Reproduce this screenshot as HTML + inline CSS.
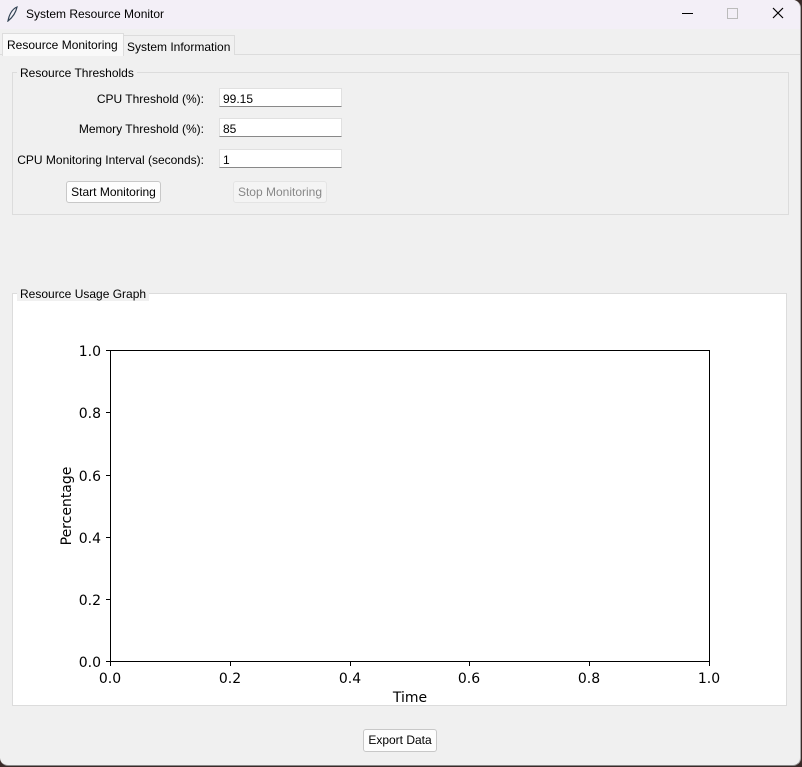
<!DOCTYPE html>
<html><head><meta charset="utf-8"><style>
body{margin:0;width:802px;height:767px;overflow:hidden;background:#3a2a28;font-family:"Liberation Sans",sans-serif;}
.win{position:absolute;left:0;top:0;width:800px;height:765px;background:#f0f0f0;border-right:1px solid #aaa;border-bottom:1px solid #888;border-radius:0 8px 8px 8px;overflow:hidden}
.title{position:absolute;left:0;top:0;width:800px;height:29px;background:#f3eff7;font-size:12px;}
.abs{position:absolute}
.lbl{position:absolute;font-size:12px;color:#000;white-space:nowrap}
.entry{position:absolute;left:219px;width:123px;height:19px;background:#fff;border:1px solid #e0e0e0;border-bottom:1px solid #888;font-size:12px;box-sizing:border-box;padding:3px 0 0 3px}
.btn{position:absolute;height:22px;border:1px solid #c8c8c8;border-radius:3px;background:#fdfdfd;font-size:12px;text-align:center;line-height:20px;box-sizing:border-box}
</style></head><body>
<div class="win">
<div class="title">
<svg class="abs" style="left:6px;top:6px" width="12" height="16" viewBox="0 0 12 16"><path d="M2 15 C3 9 6 3 11 1 C10 6 7 11 2 15Z" fill="none" stroke="#345" stroke-width="1.2"/></svg>
<div class="lbl" style="left:26px;top:7px">System Resource Monitor</div>
<div class="abs" style="left:682px;top:13px;width:11px;height:1px;background:#000"></div>
<div class="abs" style="left:727px;top:8px;width:9px;height:9px;border:1px solid #bbb"></div>
<svg class="abs" style="left:772px;top:7px" width="12" height="12"><path d="M1 1L11 11M11 1L1 11" stroke="#000" stroke-width="1.2"/></svg>
</div>
<div class="abs" style="left:0;top:54px;width:800px;height:1px;background:#dcdcdc"></div>
<div class="abs" style="left:2px;top:33px;width:120px;height:22px;background:#f9f9f9;border:1px solid #ddd;border-bottom:none"></div>
<div class="lbl" style="left:7px;top:38px">Resource Monitoring</div>
<div class="abs" style="left:123px;top:35px;width:110px;height:19px;background:#f0f0f0;border:1px solid #dcdcdc;border-bottom:none"></div>
<div class="lbl" style="left:127px;top:40px">System Information</div>

<div class="abs" style="left:12px;top:72px;width:775px;height:141px;border:1px solid #dcdcdc"></div>
<div class="lbl" style="left:17px;top:66px;background:#f0f0f0;padding:0 3px">Resource Thresholds</div>
<div class="lbl" style="right:596px;top:92px">CPU Threshold (%):</div>
<div class="lbl" style="right:596px;top:122px">Memory Threshold (%):</div>
<div class="lbl" style="right:596px;top:153px">CPU Monitoring Interval (seconds):</div>
<div class="entry" style="top:88px">99.15</div>
<div class="entry" style="top:118px">85</div>
<div class="entry" style="top:149px">1</div>
<div class="btn" style="left:66px;top:181px;width:95px">Start Monitoring</div>
<div class="btn" style="left:233px;top:181px;width:94px;color:#888;border-color:#e4e4e4;background:#f4f4f4">Stop Monitoring</div>

<div class="abs" style="left:12px;top:293px;width:775px;height:413px;border:1px solid #dcdcdc;background:#fff;box-sizing:border-box"></div>
<div class="lbl" style="left:17px;top:287px;background:#f0f0f0;padding:0 3px">Resource Usage Graph</div>
<svg class="abs" style="left:0;top:0" width="800" height="767" font-family="DejaVu Sans, sans-serif" font-size="14">
<rect x="110.5" y="350.5" width="599" height="311" fill="none" stroke="#000" stroke-width="1"/>
<g stroke="#000">
<line x1="106" x2="110" y1="350.5" y2="350.5"/><line x1="106" x2="110" y1="412.5" y2="412.5"/><line x1="106" x2="110" y1="475.5" y2="475.5"/><line x1="106" x2="110" y1="537.5" y2="537.5"/><line x1="106" x2="110" y1="599.5" y2="599.5"/><line x1="106" x2="110" y1="661.5" y2="661.5"/>
<line y1="662" y2="666" x1="110.5" x2="110.5"/><line y1="662" y2="666" x1="230.5" x2="230.5"/><line y1="662" y2="666" x1="350.5" x2="350.5"/><line y1="662" y2="666" x1="469.5" x2="469.5"/><line y1="662" y2="666" x1="589.5" x2="589.5"/><line y1="662" y2="666" x1="709.5" x2="709.5"/>
</g>
<g text-anchor="end"><text x="101" y="356">1.0</text><text x="101" y="418">0.8</text><text x="101" y="481">0.6</text><text x="101" y="543">0.4</text><text x="101" y="605">0.2</text><text x="101" y="667">0.0</text></g>
<g text-anchor="middle"><text x="110" y="683">0.0</text><text x="230" y="683">0.2</text><text x="350" y="683">0.4</text><text x="469" y="683">0.6</text><text x="589" y="683">0.8</text><text x="709" y="683">1.0</text>
<text x="410" y="702">Time</text>
<text transform="translate(71,506) rotate(-90)">Percentage</text></g>
</svg>
<div class="btn" style="left:363px;top:729px;width:74px;height:23px">Export Data</div>
</div>
</body></html>
